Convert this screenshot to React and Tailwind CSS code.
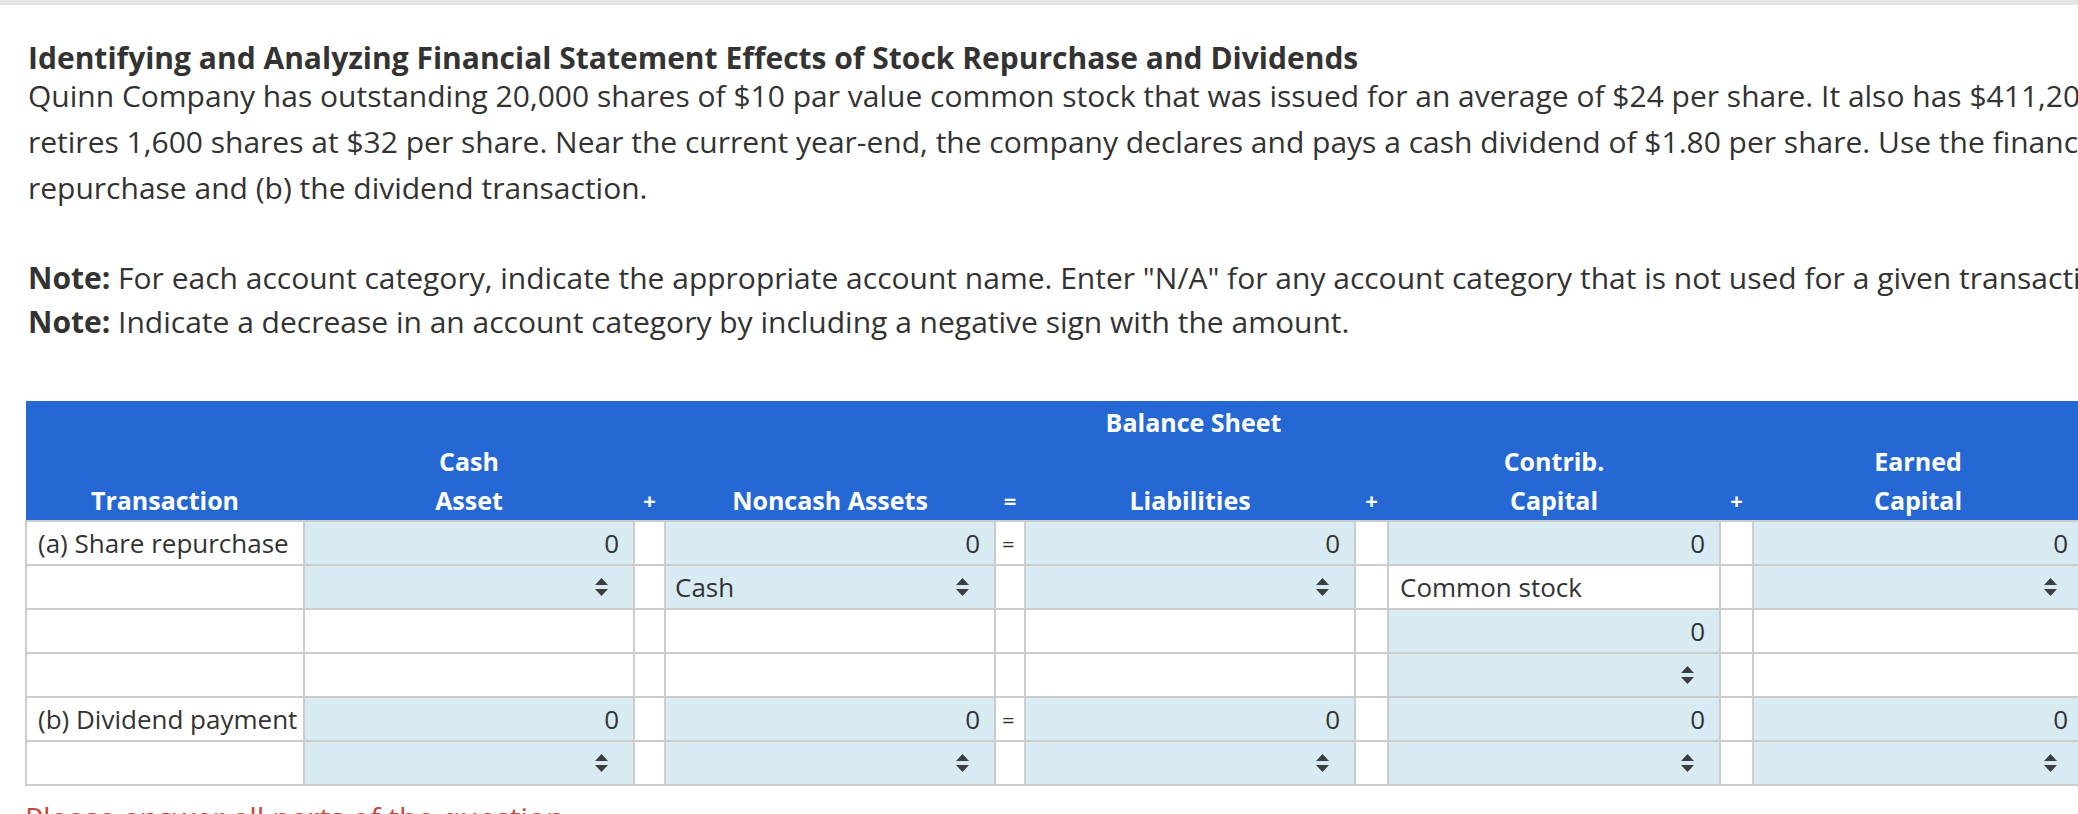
import React from 'react'

const font = { fontFamily: '"Open Sans", "Noto Sans", sans-serif' }

const BLUE = 'bg-[#d8eaf2]'

function Spinner() {
  return (
    <svg width="15" height="20" viewBox="0 0 15 20" className="inline-block">
      <path d="M7.5 1 L14 8 L1 8 Z" fill="#3b3d40" />
      <path d="M1 12 L14 12 L7.5 19 Z" fill="#3b3d40" />
    </svg>
  )
}

// cell kinds: 'num' blue with 0, 'sel' blue select, 'selText' blue select w/ text,
// 'text' white text, 'op' white operator, 'blank' white
function Cell({ kind, value }) {
  const base = 'border-2 border-[#cccccc] h-[44px] p-0 align-middle'
  if (kind === 'num') {
    return <td className={`${base} ${BLUE} text-right pr-[14px]`}>0</td>
  }
  if (kind === 'sel') {
    return (
      <td className={`${base} ${BLUE} text-right pr-[24px]`}>
        <span className="inline-flex h-full items-center"><Spinner /></span>
      </td>
    )
  }
  if (kind === 'selText') {
    return (
      <td className={`${base} ${BLUE}`}>
        <div className="flex items-center justify-between pl-[9px] pr-[24px]">
          <span>{value}</span>
          <Spinner />
        </div>
      </td>
    )
  }
  if (kind === 'text') {
    return <td className={`${base} bg-white pl-[11px] whitespace-nowrap`}>{value}</td>
  }
  if (kind === 'op') {
    return <td className={`${base} bg-white pl-[6px] text-[22px]`}>{value}</td>
  }
  return <td className={`${base} bg-white`} />
}

const rows = [
  [['text', '(a) Share repurchase'], ['num'], ['blank'], ['num'], ['op', '='], ['num'], ['blank'], ['num'], ['blank'], ['num']],
  [['blank'], ['sel'], ['blank'], ['selText', 'Cash'], ['blank'], ['sel'], ['blank'], ['text', 'Common stock'], ['blank'], ['sel']],
  [['blank'], ['blank'], ['blank'], ['blank'], ['blank'], ['blank'], ['blank'], ['num'], ['blank'], ['blank']],
  [['blank'], ['blank'], ['blank'], ['blank'], ['blank'], ['blank'], ['blank'], ['sel'], ['blank'], ['blank']],
  [['text', '(b) Dividend payment'], ['num'], ['blank'], ['num'], ['op', '='], ['num'], ['blank'], ['num'], ['blank'], ['num']],
  [['blank'], ['sel'], ['blank'], ['sel'], ['blank'], ['sel'], ['blank'], ['sel'], ['blank'], ['sel']],
]

const widths = [278, 330, 31, 330, 30, 330, 33, 332, 33, 330]

export default function App() {
  return (
    <div className="w-[2078px] h-[814px] overflow-hidden bg-white text-[#333333]" style={font}>
      <div className="h-[5px] bg-[#e5e5e5]" />
      <div className="pl-[28px] pt-[38px] whitespace-nowrap text-[30px]">
        <div className="font-bold leading-[30px]">
          Identifying and Analyzing Financial Statement Effects of Stock Repurchase and Dividends
        </div>
        <div className="leading-[46px]">
          <div>
            Quinn Company has outstanding 20,000 shares of $10 par value common stock that was issued for an average of $24 per share. It also has $411,200 of retained earnings. The company
          </div>
          <div>
            retires 1,600 shares at $32 per share. Near the current year-end, the company declares and pays a cash dividend of $1.80 per share. Use the financial statement effects template to record (a) the stock
          </div>
          <div>repurchase and (b) the dividend transaction.</div>
        </div>
        <div className="h-[45px]" />
        <div className="leading-[44px]">
          <div>
            <span className="font-bold">Note:</span> For each account category, indicate the appropriate account name. Enter "N/A" for any account category that is not used for a given transaction.
          </div>
          <div>
            <span className="font-bold">Note:</span> Indicate a decrease in an account category by including a negative sign with the amount.
          </div>
        </div>
      </div>

      <div className="pl-[25px] pt-[57px]">
        <table className="table-fixed border-collapse text-[26px] w-[2057px]">
          <colgroup>
            {widths.map((w, i) => (
              <col key={i} style={{ width: w }} />
            ))}
          </colgroup>
          <thead className="bg-[#2668d3] text-white font-bold text-[25px]">
            <tr>
              <th className="h-[40px] p-0" />
              <th colSpan={9} className="h-[40px] p-0 pt-[2px] align-middle leading-[38px]">
                Balance Sheet
              </th>
            </tr>
            <tr className="leading-[39px]">
              <th className="h-[80px] p-0 align-bottom">Transaction</th>
              <th className="p-0 align-bottom">Cash<br />Asset</th>
              <th className="p-0 align-bottom text-[22px]">+</th>
              <th className="p-0 align-bottom">Noncash Assets</th>
              <th className="p-0 align-bottom text-[22px]">=</th>
              <th className="p-0 align-bottom">Liabilities</th>
              <th className="p-0 align-bottom text-[22px]">+</th>
              <th className="p-0 align-bottom">Contrib.<br />Capital</th>
              <th className="p-0 align-bottom text-[22px]">+</th>
              <th className="p-0 align-bottom">Earned<br />Capital</th>
            </tr>
          </thead>
          <tbody>
            {rows.map((r, i) => (
              <tr key={i}>
                {r.map(([kind, value], j) => (
                  <Cell key={j} kind={kind} value={value} />
                ))}
              </tr>
            ))}
          </tbody>
        </table>
        <div className="pt-[10px] text-[30px] leading-[44px] text-[#c9463d]">
          Please answer all parts of the question.
        </div>
      </div>
    </div>
  )
}
